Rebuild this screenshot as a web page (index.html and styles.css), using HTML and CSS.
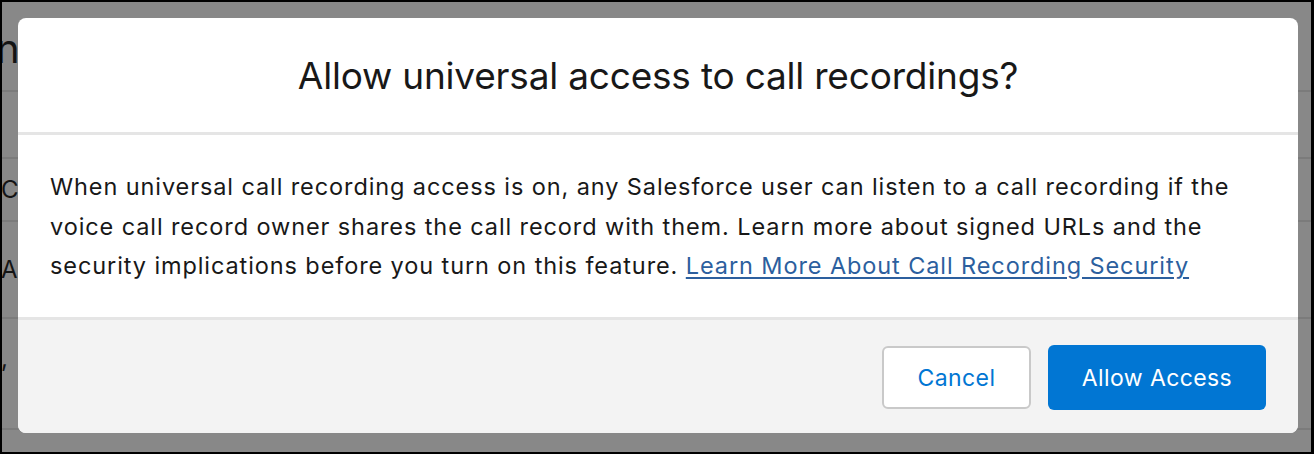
FILE: index.html
```html
<!DOCTYPE html>
<html lang="en">
<head>
  <meta charset="UTF-8" />
  <title>Allow universal access to call recordings?</title>
  <link rel="stylesheet" href="styles.css">
</head>
<body>
  <div class="frame">
    <!-- Page behind the modal (dimmed) -->
    <div class="backdrop">
      <div class="bg-row bg-title"><span>nt</span></div>
      <div class="bg-row bg-short"></div>
      <div class="bg-row bg-mid"><span>Co</span></div>
      <div class="bg-row bg-tall"><span>A</span></div>
      <div class="bg-row bg-last"><span>,</span></div>
      <div class="bg-row bg-end"></div>
    </div>

    <!-- Modal -->
    <div class="modal" role="dialog">
      <div class="modal-header">
        <h2>Allow universal access to call recordings?</h2>
      </div>
      <div class="modal-body">
        <p>When universal call recording access is on, any Salesforce user can listen to a call recording if the voice call record owner shares the call record with them. Learn more about signed URLs and the security implications before you turn on this feature. <a href="#">Learn More About Call Recording Security</a></p>
      </div>
      <div class="modal-footer">
        <button class="btn btn-neutral">Cancel</button>
        <button class="btn btn-brand">Allow Access</button>
      </div>
    </div>
  </div>
</body>
</html>
```

FILE: styles.css
```css
/* General */
body {
  margin: 0;
  font-family: Inter, "Noto Sans", sans-serif;
  color: #181818;
}

.frame {
  position: relative;
  box-sizing: border-box;
  width: 1314px;
  height: 454px;
  border-style: solid;
  border-color: #000;
  border-width: 2px 3px 2px 2px;
  overflow: hidden;
}

/* Dimmed page behind */
.backdrop {
  height: 100%;
  background-color: #888888;
  color: #141414;
}

.bg-row {
  border-bottom: 2px solid #7b7b7b;
  box-sizing: border-box;
  display: flex;
  align-items: center;
  font-size: 24px;
  overflow: hidden;
  white-space: nowrap;
}

.bg-row span {
  margin-left: -1px;
}

.bg-title {
  height: 90px;
  font-size: 40px;
}

.bg-title span {
  margin-left: -6px;
  margin-top: 4px;
}

.bg-short { height: 67px; }
.bg-mid { height: 63px; }
.bg-tall { height: 97px; }
.bg-last { height: 111px; }
.bg-last span { margin-top: -30px; }
.bg-end { height: 30px; border-bottom: none; }

/* Modal */
.modal {
  position: absolute;
  top: 16px;
  left: 16px;
  width: 1280px;
  height: 415px;
  display: flex;
  flex-direction: column;
  background: #fff;
  border-radius: 8px;
  overflow: hidden;
}

.modal-header {
  height: 114px;
  display: flex;
  align-items: center;
  justify-content: center;
  border-bottom: 3px solid #e5e5e5;
}

.modal-header h2 {
  margin: 0;
  font-size: 37px;
  font-weight: 400;
  letter-spacing: -0.2px;
}

.modal-body {
  padding: 32px 32px 31px;
  border-bottom: 3px solid #e5e5e5;
}

.modal-body p {
  margin: 0;
  font-size: 23.5px;
  letter-spacing: 0.9px;
  line-height: 39.5px;
}

.modal-body a {
  color: #2c5f9e;
  text-decoration: underline;
  text-underline-offset: 3px;
}

.modal-footer {
  flex: 1;
  background-color: #f3f3f3;
  display: flex;
  align-items: center;
  justify-content: flex-end;
  gap: 17px;
  padding: 3px 32px 0;
}

.btn {
  font-family: inherit;
  font-size: 23px;
  letter-spacing: 0.4px;
  border-radius: 6px;
  cursor: pointer;
}

.btn-neutral {
  width: 149px;
  height: 63px;
  background: #fff;
  color: #0176d3;
  border: 2px solid #c9c9c9;
}

.btn-brand {
  width: 218px;
  height: 65px;
  background: #0176d3;
  color: #fff;
  border: none;
}
```
